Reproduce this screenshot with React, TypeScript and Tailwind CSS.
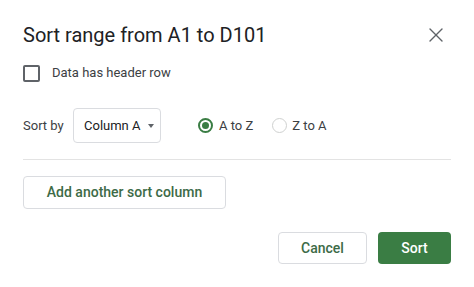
import { X } from "lucide-react";

export default function App() {
  return (
    <div className="w-[474px] h-[287px] bg-white overflow-hidden font-['Roboto',sans-serif] text-[#3c4043]">
      <div className="px-[23px] pt-[23px] flex flex-col">
        <div className="flex items-center justify-between h-6">
          <h1 className="text-[20px] leading-6 text-[#202124]">Sort range from A1 to D101</h1>
          <button className="w-6 h-6 mr-[3px] flex items-center justify-center text-[#5f6368]">
            <X className="w-6 h-6" strokeWidth={1.4} />
          </button>
        </div>

        <label className="mt-[17px] flex items-center h-[18px]">
          <span className="w-[17px] h-[17px] border-2 border-[#5f6368] rounded-[2px]" />
          <span className="ml-[12px] text-[13px]">Data has header row</span>
        </label>

        <div className="mt-[26px] flex items-center h-[35px]">
          <span className="text-[13px] w-[50px]">Sort by</span>
          <button className="w-[88px] h-[35px] border border-[#dadce0] rounded-[4px] flex items-center pl-[10px] text-[13px] text-[#202124]">
            Column A
            <span className="ml-[7px] w-0 h-0 border-x-[3.5px] border-x-transparent border-t-[4px] border-t-[#5f6368]" />
          </button>
          <div className="ml-[37px] flex items-center">
            <span className="w-[15px] h-[15px] rounded-full border-2 border-[#3a7d44] flex items-center justify-center">
              <span className="w-[7px] h-[7px] rounded-full bg-[#3a7d44]" />
            </span>
            <span className="ml-[6px] text-[13px]">A to Z</span>
          </div>
          <div className="ml-[19px] flex items-center">
            <span className="w-[15px] h-[15px] rounded-full border border-[#cfd1d0]" />
            <span className="ml-[5px] text-[13px]">Z to A</span>
          </div>
        </div>

        <div className="mt-[16px] h-px bg-[#e3e3e3]" />

        <div className="mt-[16px]">
          <button className="w-[203px] h-[33px] border border-[#dadce0] rounded-[4px] text-[14px] font-medium text-[#3d6b47]">
            Add another sort column
          </button>
        </div>

        <div className="mt-[23px] flex justify-end gap-[11px]">
          <button className="w-[89px] h-[32px] border border-[#dadce0] rounded-[4px] text-[14px] font-medium text-[#3d6b47]">
            Cancel
          </button>
          <button className="w-[73px] h-[32px] rounded-[4px] bg-[#3a7d44] text-[14px] font-medium text-white">
            Sort
          </button>
        </div>
      </div>
    </div>
  );
}
